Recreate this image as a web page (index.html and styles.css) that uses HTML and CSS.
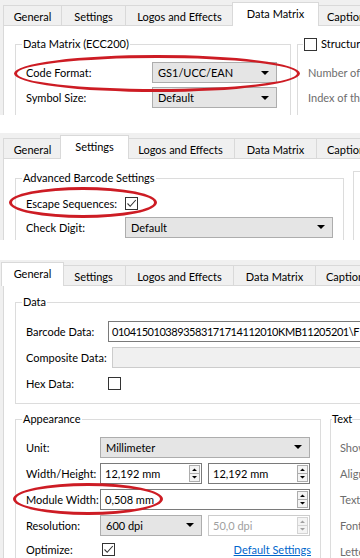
FILE: index.html
```html
<!DOCTYPE html>
<html lang="en">

<head>
    <meta charset="UTF-8">
    <meta name="viewport" content="width=device-width, initial-scale=1.0">
    <title>Barcode Properties</title>
    <link rel="stylesheet" href="styles.css">
</head>

<body>
    <!-- Data Matrix tab -->
    <div class="shot s1">
        <div class="tabs">
            <div class="tab t-gen">General</div>
            <div class="tab t-set">Settings</div>
            <div class="tab t-logo">Logos and Effects</div>
            <div class="tab t-dm active">Data Matrix</div>
            <div class="tab t-cap">Caption</div>
        </div>
        <div class="panel p1">
            <fieldset class="box b-dm">
                <legend>Data Matrix (ECC200)</legend>
                <div class="rows r1">
                    <div class="row">
                        <label class="lbl">Code Format:</label>
                        <div class="combo">GS1/UCC/EAN<svg class="drop" width="8" height="4" viewBox="0 0 8 4"><path d="M0 0H8L4 4Z"/></svg></div>
                    </div>
                    <div class="row">
                        <label class="lbl">Symbol Size:</label>
                        <div class="combo">Default<svg class="drop" width="8" height="4" viewBox="0 0 8 4"><path d="M0 0H8L4 4Z"/></svg></div>
                    </div>
                </div>
            </fieldset>
            <fieldset class="box b-struct">
                <legend><span class="check"></span>Structured Append</legend>
                <div class="rows r1">
                    <div class="row dim">Number of Symbols:</div>
                    <div class="row dim">Index of the Symbol:</div>
                </div>
            </fieldset>
        </div>
        <div class="ring ring1"></div>
    </div>

    <!-- Settings tab -->
    <div class="shot s2">
        <div class="tabs">
            <div class="tab t-gen">General</div>
            <div class="tab t-set active">Settings</div>
            <div class="tab t-logo">Logos and Effects</div>
            <div class="tab t-dm">Data Matrix</div>
            <div class="tab t-cap">Caption</div>
        </div>
        <div class="panel p2">
            <fieldset class="box b-adv">
                <legend>Advanced Barcode Settings</legend>
                <div class="rows r2">
                    <div class="row">
                        <label class="lbl">Escape Sequences:</label>
                        <span class="check on"><svg width="11" height="11" viewBox="0 0 11 11"><path d="M1.5 5.5L4.2 8.3L9.8 2" fill="none" stroke="#333" stroke-width="1.1"/></svg></span>
                    </div>
                    <div class="row">
                        <label class="lbl">Check Digit:</label>
                        <div class="combo wide">Default<svg class="drop" width="8" height="4" viewBox="0 0 8 4"><path d="M0 0H8L4 4Z"/></svg></div>
                    </div>
                </div>
            </fieldset>
            <fieldset class="box b-side"><legend></legend></fieldset>
        </div>
        <div class="ring ring2"></div>
    </div>

    <!-- General tab -->
    <div class="shot s3">
        <div class="tabs">
            <div class="tab t-gen active">General</div>
            <div class="tab t-set">Settings</div>
            <div class="tab t-logo">Logos and Effects</div>
            <div class="tab t-dm">Data Matrix</div>
            <div class="tab t-cap">Caption</div>
        </div>
        <div class="panel p3">
            <fieldset class="box b-data">
                <legend>Data</legend>
                <div class="rows r3">
                    <div class="row">
                        <label class="lbl">Barcode Data:</label>
                        <div class="field">0104150103893583171714112010KMB11205201\F</div>
                    </div>
                    <div class="row">
                        <label class="lbl">Composite Data:</label>
                        <div class="field off"></div>
                    </div>
                    <div class="row">
                        <label class="lbl">Hex Data:</label>
                        <span class="check"></span>
                    </div>
                </div>
            </fieldset>
            <div class="pair">
                <fieldset class="box b-look">
                    <legend>Appearance</legend>
                    <div class="rows r4">
                        <div class="row">
                            <label class="lbl">Unit:</label>
                            <div class="combo full">Millimeter<svg class="drop" width="8" height="4" viewBox="0 0 8 4"><path d="M0 0H8L4 4Z"/></svg></div>
                        </div>
                        <div class="row">
                            <label class="lbl">Width/Height:</label>
                            <div class="spin half">12,192 mm<svg width="11" height="17" viewBox="0 0 11 17"><rect x="0.5" y="0.5" width="10" height="16" fill="#f4f4f4" stroke="#adadad"/><path d="M0 8.5H11" stroke="#adadad"/><path d="M3 6H8L5.5 3.5Z M3 11H8L5.5 13.5Z"/></svg></div>
                            <div class="spin half">12,192 mm<svg width="11" height="17" viewBox="0 0 11 17"><rect x="0.5" y="0.5" width="10" height="16" fill="#f4f4f4" stroke="#adadad"/><path d="M0 8.5H11" stroke="#adadad"/><path d="M3 6H8L5.5 3.5Z M3 11H8L5.5 13.5Z"/></svg></div>
                        </div>
                        <div class="row">
                            <label class="lbl">Module Width:</label>
                            <div class="spin full">0,508 mm<svg width="11" height="17" viewBox="0 0 11 17"><rect x="0.5" y="0.5" width="10" height="16" fill="#f4f4f4" stroke="#adadad"/><path d="M0 8.5H11" stroke="#adadad"/><path d="M3 6H8L5.5 3.5Z M3 11H8L5.5 13.5Z"/></svg></div>
                        </div>
                        <div class="row">
                            <label class="lbl">Resolution:</label>
                            <div class="combo half">600 dpi<svg class="drop" width="8" height="4" viewBox="0 0 8 4"><path d="M0 0H8L4 4Z"/></svg></div>
                            <div class="spin half off">50,0 dpi<svg width="11" height="17" viewBox="0 0 11 17"><rect x="0.5" y="0.5" width="10" height="16" fill="#f4f4f4" stroke="#d4d4d4"/><path d="M0 8.5H11" stroke="#d4d4d4"/><path d="M3 6H8L5.5 3.5Z M3 11H8L5.5 13.5Z" fill="#a0a0a0"/></svg></div>
                        </div>
                        <div class="row last">
                            <label class="lbl">Optimize:</label>
                            <span class="check on nudge"><svg width="11" height="11" viewBox="0 0 11 11"><path d="M1.5 5.5L4.2 8.3L9.8 2" fill="none" stroke="#333" stroke-width="1.1"/></svg></span>
                            <a class="link" href="#">Default Settings</a>
                        </div>
                    </div>
                </fieldset>
                <fieldset class="box b-text">
                    <legend>Text</legend>
                    <div class="rows r4">
                        <div class="row dim">Show Text:</div>
                        <div class="row dim">Alignment:</div>
                        <div class="row dim">Text Position:</div>
                        <div class="row dim">Font:</div>
                        <div class="row dim">Letter Spacing:</div>
                    </div>
                </fieldset>
            </div>
        </div>
        <div class="ring ring3"></div>
    </div>
</body>

</html>
```

FILE: styles.css
```css
* {
    box-sizing: border-box;
}

body {
    margin: 0;
    background-color: #fff;
    font-family: Lato, "Noto Sans", sans-serif;
    font-size: 11px;
    color: #000;
}

.shot {
    position: relative;
    width: 360px;
    overflow: hidden;
    background-color: #f0f0f0;
}

.s1 {
    height: 115px;
}

.s2 {
    height: 107px;
    margin-top: 18px;
}

.s3 {
    height: 298px;
    margin-top: 20px;
}

/* Tab strip */
.tabs {
    display: flex;
    align-items: flex-end;
    height: 25px;
    padding-left: 3px;
}

.tab {
    flex: none;
    height: 20px;
    padding-top: 2px;
    margin-left: -1px;
    border: 1px solid #d9d9d9;
    border-bottom: none;
    display: flex;
    align-items: center;
    justify-content: center;
    white-space: nowrap;
}

.tab:first-child {
    margin-left: 0;
}

.tab.active {
    position: relative;
    z-index: 1;
    height: 24px;
    padding: 0 0 2px;
    margin: 0 -2px -1px;
    background-color: #fff;
}

.tab.active:first-child {
    margin-left: -2px;
}

.t-gen { width: 59px; }
.t-set { width: 65px; }
.t-logo { width: 109px; }
.t-dm { width: 83px; }

.t-cap {
    width: 60px;
    justify-content: flex-start;
    padding-left: 10px;
}

.t-gen.active { width: 63px; }
.t-set.active { width: 69px; }
.t-dm.active { width: 87px; }

/* Tab page */
.panel {
    height: 300px;
    margin-left: 3px;
    padding-left: 11px;
    background-color: #fff;
    border-top: 1px solid #d9d9d9;
    border-left: 1px solid #d9d9d9;
    display: flex;
    align-items: flex-start;
}

.p1 {
    padding-top: 11px;
    gap: 6px;
}

.p2 {
    padding-top: 12px;
    gap: 9px;
}

.p3 {
    padding-top: 9px;
    flex-direction: column;
    gap: 8px;
}

/* Group boxes */
.box {
    flex: none;
    margin: 0;
    min-width: 0;
    height: 200px;
    padding: 0 0 0 10px;
    border: 1px solid #dcdcdc;
}

.box legend {
    padding: 0 1px;
    margin-left: -4px;
    line-height: 14px;
    display: flex;
    align-items: center;
}

.b-dm { width: 276px; }
.b-struct { width: 200px; }
.b-adv { width: 329px; }
.b-side { width: 100px; }

.b-data {
    width: 400px;
    height: auto;
    padding-bottom: 7px;
}

.pair {
    display: flex;
    gap: 9px;
}

.b-look { width: 306px; }

.b-text {
    width: 100px;
    padding-left: 9px;
}

.b-text legend {
    margin-left: -8px;
    padding: 0;
}

.b-struct legend {
    margin-left: -5px;
}

.b-struct legend .check {
    margin-right: 4px;
}

/* Rows */
.rows {
    display: flex;
    flex-direction: column;
}

.r1 { padding-top: 9px; }
.r2 { padding-top: 6px; }
.r3 { padding-top: 9px; }
.r4 { padding-top: 8px; }

.row {
    display: flex;
    align-items: center;
    height: 25px;
    white-space: nowrap;
}

.r2 .row { height: 24px; }
.r3 .row,
.r4 .row { height: 26px; }
.r4 .row.last { height: 22px; }

.lbl {
    flex: none;
}

.b-dm .lbl { width: 126px; }
.b-adv .lbl { width: 99px; }
.b-data .lbl { width: 82px; }
.b-look .lbl { width: 74px; }

.dim {
    color: #6d6d6d;
}

/* Controls */
.combo {
    flex: none;
    width: 125px;
    height: 21px;
    padding: 0 7px 0 5px;
    background-color: #e5e5e5;
    border: 1px solid #adadad;
    display: flex;
    align-items: center;
    justify-content: space-between;
}

.combo.wide { width: 208px; }
.combo.full { width: 210px; }
.combo.half { width: 102px; }

.field {
    flex: none;
    width: 300px;
    height: 21px;
    padding-left: 3px;
    border: 1px solid #7a7a7a;
    display: flex;
    align-items: center;
    letter-spacing: -0.45px;
}

.field.off {
    margin-left: 4px;
    background-color: #f0f0f0;
    border-color: #cccccc;
}

.spin {
    flex: none;
    height: 21px;
    padding: 0 1px 0 4px;
    border: 1px solid #7a7a7a;
    display: flex;
    align-items: center;
    justify-content: space-between;
}

.spin.full { width: 210px; }
.spin.half { width: 102px; }

.spin.off {
    color: #a0a0a0;
    border-color: #cccccc;
}

.row .half + .half {
    margin-left: 6px;
}

.check {
    flex: none;
    width: 13px;
    height: 13px;
    border: 1px solid #333;
    background-color: #fff;
    display: inline-flex;
    align-items: center;
    justify-content: center;
}

.check.nudge {
    margin-left: 2px;
}

.link {
    margin-left: auto;
    margin-right: 9px;
    color: #0066cc;
}

/* Red highlight marks */
.ring {
    position: absolute;
    border: 3px solid #cd1c24;
    border-radius: 50%;
}

.ring1 {
    left: 14px;
    top: 55px;
    width: 286px;
    height: 37px;
}

.ring2 {
    left: 9px;
    top: 54px;
    width: 148px;
    height: 31px;
}

.ring3 {
    left: 13px;
    top: 223px;
    width: 150px;
    height: 32px;
}
```
